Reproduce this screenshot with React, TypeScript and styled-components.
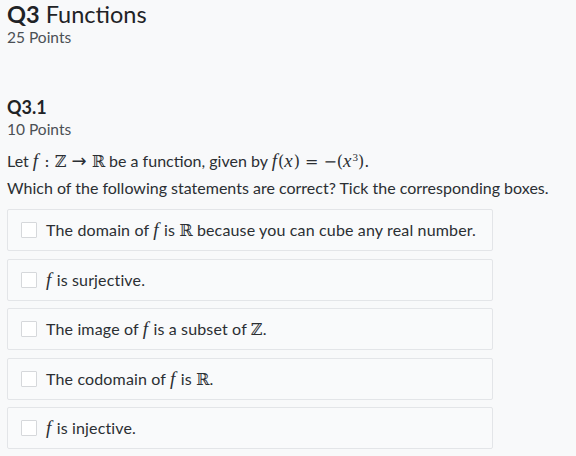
import React from 'react';
import styled, { createGlobalStyle } from 'styled-components';

const Global = createGlobalStyle`
  html, body {
    margin: 0;
    background: #f8f9fa;
  }
  body {
    font-family: Lato, "Open Sans", sans-serif;
    color: #2b2f33;
  }
`;

const Page = styled.div`
  padding: 0 7px;
`;

const Heading = styled.h1`
  margin: 0;
  padding-top: 1px;
  font-size: 23.5px;
  line-height: 26px;
  font-weight: 400;
  color: #1f2326;
  b {
    font-weight: 700;
  }
`;

const PointsLabel = styled.div`
  font-size: 15.5px;
  line-height: 20px;
  color: #4b5055;
`;

const SubHeading = styled.h2`
  margin: 0;
  margin-top: 48px;
  font-size: 18px;
  line-height: 24px;
  font-weight: 700;
  color: #1f2326;
`;

const Prompt = styled.p`
  margin: 5px 0 8px;
  font-size: 16px;
  line-height: 26px;
  color: #2b2f33;
`;

const M = styled.span`
  font-family: "DejaVu Serif", "Liberation Serif", serif;
  font-size: 16px;
`;

const Arrow = styled.span`
  font-family: "DejaVu Sans", sans-serif;
  font-size: 18px;
`;

const F = styled.span`
  font-family: "Liberation Serif", serif;
  font-style: italic;
  font-size: 19px;
  padding-right: 1px;
`;

const Sup = styled.sup`
  font-family: "Liberation Serif", serif;
  font-size: 11px;
`;

const Options = styled.div`
  display: flex;
  flex-direction: column;
  gap: 7.5px;
  width: 486px;
`;

const Option = styled.label`
  display: flex;
  align-items: center;
  gap: 9px;
  height: 42px;
  box-sizing: border-box;
  padding: 0 12px 0 13px;
  border: 1px solid #e3e5e8;
  border-radius: 2px;
  background: #f9fafb;
  font-size: 16px;
  letter-spacing: 0.15px;
  color: #2b2f33;
`;

const Box = styled.span`
  width: 14px;
  height: 14px;
  flex: none;
  border: 1px solid #d6d8db;
  background: #fff;
  border-radius: 1px;
`;

const f = <F>f</F>;
const R = <M>ℝ</M>;
const Z = <M>ℤ</M>;

export default function App() {
  return (
    <>
      <Global />
      <Page>
        <Heading>
          <b>Q3</b> Functions
        </Heading>
        <PointsLabel>25 Points</PointsLabel>
        <SubHeading>Q3.1</SubHeading>
        <PointsLabel>10 Points</PointsLabel>
        <Prompt>
          Let {f}
          <M> : ℤ </M>
          <Arrow>→</Arrow>
          <M> ℝ</M> be a function, given by {f}
          <M>(</M>
          <F>x</F>
          <M>) = −(</M>
          <F>x</F>
          <Sup>3</Sup>
          <M>).</M>
          <br />
          Which of the following statements are correct? Tick the corresponding boxes.
        </Prompt>
        <Options>
          <Option>
            <Box />
            <span>The domain of {f} is {R} because you can cube any real number.</span>
          </Option>
          <Option>
            <Box />
            <span>{f} is surjective.</span>
          </Option>
          <Option>
            <Box />
            <span>The image of {f} is a subset of {Z}.</span>
          </Option>
          <Option>
            <Box />
            <span>The codomain of {f} is {R}.</span>
          </Option>
          <Option>
            <Box />
            <span>{f} is injective.</span>
          </Option>
        </Options>
      </Page>
    </>
  );
}
